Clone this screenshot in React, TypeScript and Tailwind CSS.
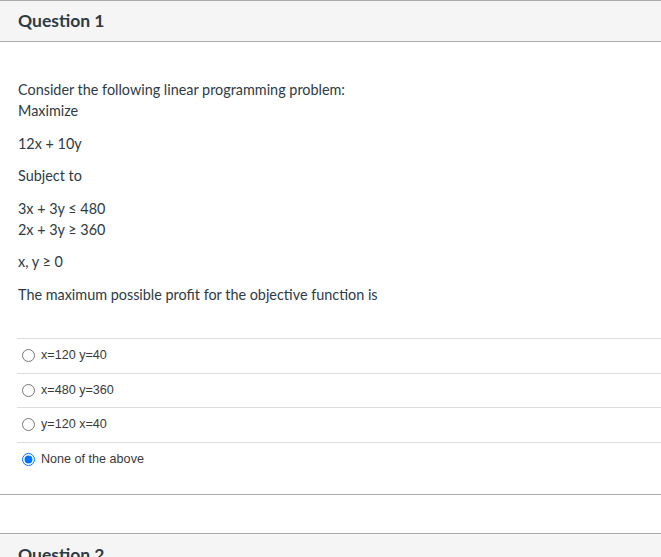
import React from "react";

const options = [
  { label: "x=120 y=40", checked: false },
  { label: "x=480 y=360", checked: false },
  { label: "y=120 x=40", checked: false },
  { label: "None of the above", checked: true },
];

export default function App() {
  return (
    <div className="w-[661px] bg-white text-[#2d3b45]" style={{ fontFamily: "Lato, 'Noto Sans', sans-serif" }}>
      <div className="border-t border-[#aaaaaa]">
        <div className="h-[41px] bg-[#f5f5f5] border-b border-[#aaaaaa] flex items-center pl-[18px]">
          <span className="text-[17.5px] font-bold leading-none">Question 1</span>
        </div>
        <div className="pt-[37px] px-[18px] flex flex-col gap-[11.5px] text-[14.4px] leading-[21px]">
          <p>
            Consider the following linear programming problem:
            <br />
            Maximize
          </p>
          <p>12x + 10y</p>
          <p>Subject to</p>
          <p>
            3x + 3y ≤ 480
            <br />
            2x + 3y ≥ 360
          </p>
          <p>x, y ≥ 0</p>
          <p>The maximum possible profit for the objective function is</p>
        </div>
        <div className="mt-[33.5px] ml-[17px]">
          {options.map((o, i) => (
            <label
              key={i}
              className="h-[34.5px] border-t border-[#dddddd] flex items-center pl-[5px] gap-[6px] text-[12.6px] text-[#3a3a3a]"
              style={{ fontFamily: "'Liberation Sans', Arial, sans-serif" }}
            >
              <input type="radio" name="q1" defaultChecked={o.checked} className="w-[13px] h-[13px] m-0" />
              <span>{o.label}</span>
            </label>
          ))}
        </div>
        <div className="h-[18px]" />
      </div>
      <div className="border-t border-[#aaaaaa] h-[39px]" />
      <div className="border-t border-[#aaaaaa]">
        <div className="h-[41px] bg-[#f5f5f5] flex items-center pl-[18px]">
          <span className="text-[17.5px] font-bold leading-none">Question 2</span>
        </div>
      </div>
    </div>
  );
}
